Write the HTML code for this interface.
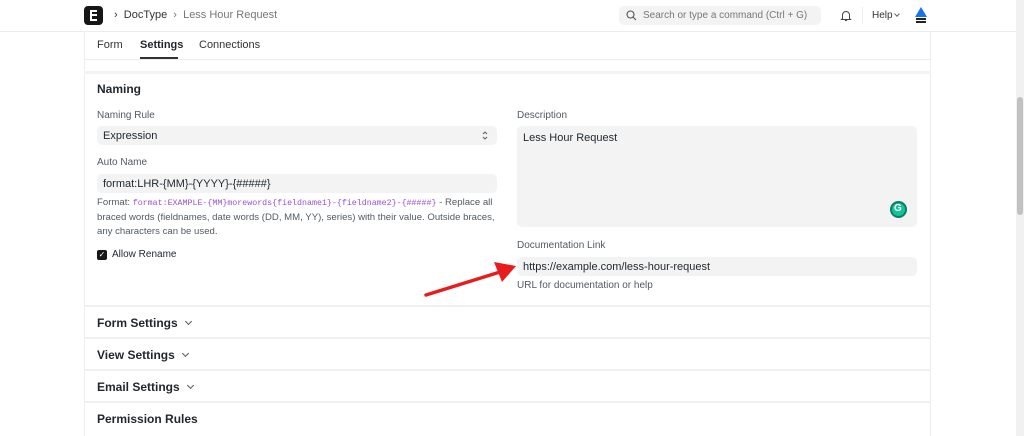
<!DOCTYPE html>
<html><head><style>
*{box-sizing:border-box;margin:0;padding:0}
body{width:1024px;height:436px;overflow:hidden;background:#fff;font-family:"Liberation Sans",Arial,sans-serif;color:#1f272e;position:relative}
.abs{position:absolute}
.lbl{font-size:10px;color:#525a61}
.inp{background:#f3f3f3;border-radius:5px;font-size:11px;color:#1f272e}
.sec{position:absolute;left:84px;width:847px;height:32px;border-top:2px solid #f0f0f0;font-size:12px;font-weight:bold;padding:9px 0 0 13px}
.chev{display:inline-block;width:5px;height:5px;border-right:1px solid #555;border-bottom:1px solid #555;transform:rotate(45deg);margin-left:8px;position:relative;top:-3px}
</style></head><body>
<div class="abs" style="left:0;top:0;width:1016px;height:32px;border-bottom:1px solid #ececec"></div>
<div class="abs" style="left:84px;top:6px;width:19px;height:19px;background:#171717;border-radius:4px"></div>
<div class="abs" style="left:90px;top:10px;width:7px;height:11px;border:2px solid #fff;border-right:none"></div>
<div class="abs" style="left:92px;top:14px;width:5px;height:2px;background:#fff"></div>
<div class="abs" style="left:114px;top:9px;font-size:11px;color:#333">›&nbsp; DocType &nbsp;<span style="color:#777">›&nbsp; Less Hour Request</span></div>
<div class="abs" style="left:619px;top:6px;width:202px;height:19px;background:#f3f3f3;border-radius:5px"></div>
<svg class="abs" style="left:626px;top:10px" width="11" height="11" viewBox="0 0 11 11"><circle cx="4.5" cy="4.5" r="3.5" fill="none" stroke="#555" stroke-width="1.1"/><line x1="7" y1="7" x2="10" y2="10" stroke="#555" stroke-width="1.1"/></svg>
<div class="abs" style="left:643px;top:10px;font-size:10px;color:#777">Search or type a command (Ctrl + G)</div>
<svg class="abs" style="left:840px;top:9px" width="12" height="13" viewBox="0 0 12 13"><path d="M2.5 9.5V6a3.5 3.5 0 017 0v3.5l1 1H1.5z M5 11.5h2" fill="none" stroke="#444" stroke-width="1"/></svg>
<div class="abs" style="left:862px;top:7px;width:1px;height:17px;background:#eee"></div>
<div class="abs" style="left:872px;top:10px;font-size:10px;color:#333">Help</div><div class="abs" style="left:895px;top:12px;width:4px;height:4px;border-right:1px solid #666;border-bottom:1px solid #666;transform:rotate(45deg)"></div>
<svg class="abs" style="left:914px;top:6px" width="14" height="18" viewBox="0 0 14 18"><path d="M7 1L13 11H1z" fill="#1a73e8"/><rect x="2" y="12" width="10" height="2" fill="#222"/><rect x="2" y="15" width="10" height="2" fill="#222"/></svg>
<div class="abs" style="left:1016px;top:0;width:8px;height:436px;background:#f1f1f1"></div>
<div class="abs" style="left:1017px;top:97px;width:6px;height:118px;background:#c1c1c1;border-radius:3px"></div>
<div class="abs" style="left:84px;top:32px;width:847px;height:404px;border-left:1px solid #ededed;border-right:1px solid #ededed"></div>
<div class="abs" style="left:97px;top:39px;font-size:11px;color:#333">Form</div>
<div class="abs" style="left:140px;top:39px;font-size:11px;font-weight:bold">Settings</div>
<div class="abs" style="left:140px;top:57px;width:38px;height:2px;background:#333"></div>
<div class="abs" style="left:199px;top:39px;font-size:11px;color:#333">Connections</div>
<div class="abs" style="left:84px;top:59px;width:847px;height:1px;background:#ececec"></div>
<div class="abs" style="left:84px;top:71px;width:847px;height:3px;background:#f3f3f3"></div>
<div class="abs" style="left:97px;top:82px;font-size:12px;font-weight:bold">Naming</div>
<div class="abs lbl" style="left:97px;top:110px">Naming Rule</div>
<div class="abs inp" style="left:97px;top:126px;width:400px;height:19px;padding:4px 6px">Expression<svg style="position:absolute;right:9px;top:5px" width="6" height="9" viewBox="0 0 6 9"><path d="M1 3L3 1L5 3M1 6L3 8L5 6" fill="none" stroke="#555" stroke-width="0.9"/></svg></div>
<div class="abs lbl" style="left:97px;top:157px">Auto Name</div>
<div class="abs inp" style="left:97px;top:174px;width:400px;height:19px;padding:4px 6px">format:LHR-{MM}-{YYYY}-{#####}</div>
<div class="abs" style="left:97px;top:196px;width:400px;font-size:9.6px;line-height:14px;color:#525a61">Format: <span style="font-family:'Liberation Mono',monospace;color:#9c4fd6;font-size:8.3px">format:EXAMPLE-{MM}morewords{fieldname1}-{fieldname2}-{#####}</span> - Replace all braced words (fieldnames, date words (DD, MM, YY), series) with their value. Outside braces, any characters can be used.</div>
<div class="abs" style="left:97px;top:250px;width:10px;height:10px;background:#171717;border-radius:2px;color:#fff;font-size:8px;text-align:center;line-height:10px">✓</div>
<div class="abs" style="left:112px;top:249px;font-size:10px;color:#1f272e">Allow Rename</div>
<div class="abs lbl" style="left:517px;top:110px">Description</div>
<div class="abs inp" style="left:517px;top:126px;width:400px;height:101px;padding:6px 6px">Less Hour Request</div>
<div class="abs" style="left:890px;top:201px;width:17px;height:17px;border-radius:50%;background:#15c39a;border:2px solid #0c7e63"></div>
<div class="abs" style="left:894px;top:203px;font-size:10px;font-weight:bold;color:#fff">G</div>
<div class="abs lbl" style="left:517px;top:240px">Documentation Link</div>
<div class="abs inp" style="left:517px;top:257px;width:400px;height:19px;padding:4px 6px">https://example.com/less-hour-request</div>
<div class="abs lbl" style="left:517px;top:280px">URL for documentation or help</div>
<svg class="abs" style="left:420px;top:258px" width="100" height="42" viewBox="0 0 100 42"><line x1="6" y1="37" x2="80" y2="14" stroke="#e81c1c" stroke-width="3.5" stroke-linecap="round"/><path d="M96 8L74 4L82 24z" fill="#e81c1c"/></svg>
<div class="sec" style="top:305px">Form Settings<span class="chev"></span></div>
<div class="sec" style="top:337px">View Settings<span class="chev"></span></div>
<div class="sec" style="top:369px">Email Settings<span class="chev"></span></div>
<div class="sec" style="top:401px">Permission Rules</div>
</body></html>
